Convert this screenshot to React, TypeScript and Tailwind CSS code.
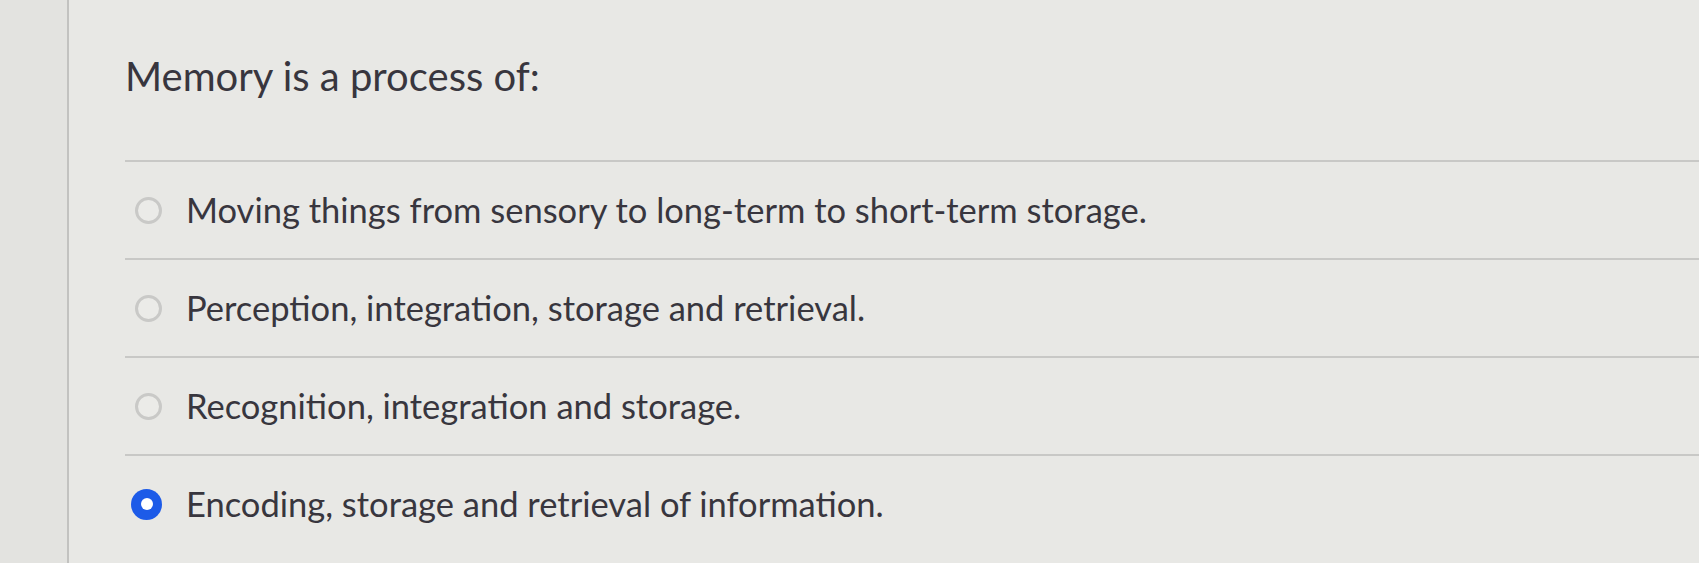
import { useState } from 'react'

const OPTIONS = [
  'Moving things from sensory to long-term to short-term storage.',
  'Perception, integration, storage and retrieval.',
  'Recognition, integration and storage.',
  'Encoding, storage and retrieval of information.',
]

export default function App() {
  const [picked, setPicked] = useState(3)

  return (
    <div className="w-[1699px] h-[563px] flex overflow-hidden bg-[#e8e8e5] text-[#38363e] font-['Lato','Open_Sans',sans-serif]">
      {/* left gutter */}
      <div className="w-[69px] shrink-0 bg-[#e3e3e0] border-r-2 border-[#c2c2c0]" />

      <div className="flex-1 pl-[56px] pt-[56px]">
        <h1 className="text-[40px] leading-[40px] font-normal">Memory is a process of:</h1>

        <div className="mt-[64px]">
          {OPTIONS.map((o, i) => (
            <label key={o} onClick={() => setPicked(i)}
              className="h-[98px] flex items-center border-t-2 border-[#c8c8c6] cursor-pointer">
              {picked === i ? (
                <span className="ml-[6px] w-[31px] h-[31px] rounded-full bg-[#1d5be8] flex items-center justify-center shrink-0">
                  <span className="w-[12px] h-[12px] rounded-full bg-white" />
                </span>
              ) : (
                <span className="ml-[10px] w-[27px] h-[27px] rounded-full border-[3px] border-[#c9c9c7] bg-[#ebebe8] shrink-0" />
              )}
              <span className="ml-[24px] text-[34.5px] leading-[34.5px]">{o}</span>
            </label>
          ))}
        </div>
      </div>
    </div>
  )
}
